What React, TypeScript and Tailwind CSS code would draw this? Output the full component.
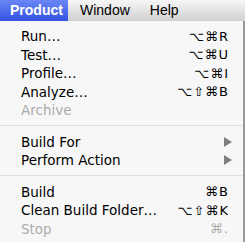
import React from "react";

type Item =
  | { kind: "item"; label: string; shortcut?: string; disabled?: boolean; submenu?: boolean }
  | { kind: "sep" };

const items: Item[] = [
  { kind: "item", label: "Run…", shortcut: "⌥⌘R" },
  { kind: "item", label: "Test…", shortcut: "⌥⌘U" },
  { kind: "item", label: "Profile…", shortcut: "⌥⌘I" },
  { kind: "item", label: "Analyze…", shortcut: "⌥⇧⌘B" },
  { kind: "item", label: "Archive", disabled: true },
  { kind: "sep" },
  { kind: "item", label: "Build For", submenu: true },
  { kind: "item", label: "Perform Action", submenu: true },
  { kind: "sep" },
  { kind: "item", label: "Build", shortcut: "⌘B" },
  { kind: "item", label: "Clean Build Folder…", shortcut: "⌥⇧⌘K" },
  { kind: "item", label: "Stop", shortcut: "⌘.", disabled: true },
];

export default function App() {
  return (
    <div
      className="w-[245px] h-[242px] overflow-hidden bg-[#8a8a8a] flex flex-col"
      style={{ fontFamily: '"DejaVu Sans", "Liberation Sans", sans-serif' }}
    >
      <div
        className="h-[21px] shrink-0 flex items-stretch bg-gradient-to-b from-[#f7f7f7] to-[#cfcfcf] text-[14px] text-black"
        style={{ fontFamily: '"Liberation Sans", Arial, sans-serif' }}
      >
        <div className="w-[68px] bg-gradient-to-b from-[#6b86f5] to-[#3350e4] text-white font-bold flex items-center pl-[10px]">
          Product
        </div>
        <div className="flex items-center pl-[12px]">Window</div>
        <div className="flex items-center pl-[20px]">Help</div>
      </div>
      <div className="flex flex-1">
        <div className="w-[243px] bg-[#f7f7f7] pt-[6px] text-[13.5px] text-black">
          {items.map((it, i) =>
            it.kind === "sep" ? (
              <div key={i} className="h-[13px] pt-[5px]">
                <div className="h-px bg-[#dedede]" />
              </div>
            ) : (
              <div
                key={i}
                className={`h-[18.5px] flex items-center justify-between pl-[21px] pr-[14px] ${
                  it.disabled ? "text-[#ababab]" : "text-black"
                }`}
              >
                <span>{it.label}</span>
                {it.shortcut && <span className="tracking-[1px] text-[13px]">{it.shortcut}</span>}
                {it.submenu && (
                  <svg width="8" height="10" viewBox="0 0 8 10" className="mr-[-3px]">
                    <path d="M0 0 L8 5 L0 10 Z" fill="#7f7f7f" />
                  </svg>
                )}
              </div>
            )
          )}
        </div>
        <div className="w-[2px] bg-[#9a9a9a]" />
      </div>
    </div>
  );
}
